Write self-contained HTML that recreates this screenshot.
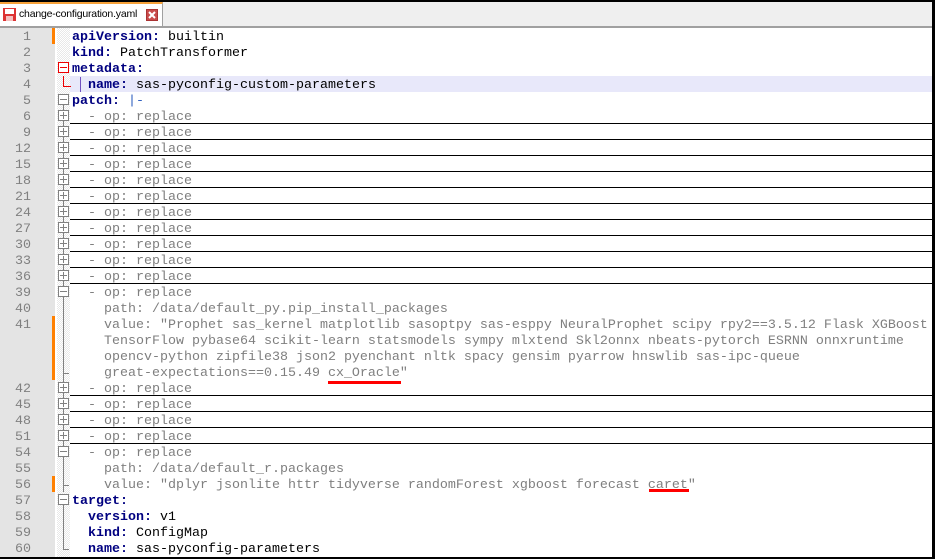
<!DOCTYPE html><html><head><style>
body{margin:0;width:935px;height:559px;overflow:hidden;background:#fff;position:relative;font-family:"Liberation Mono",monospace}
#frame{position:absolute;left:0;top:0;border-top:2px solid #000;border-right:3px solid #000;border-bottom:2px solid #000;box-sizing:border-box;width:935px;height:559px}
#tabbar{position:absolute;left:0;top:2px;width:932px;height:24px;background:#efefef;border-bottom:2px solid #a0a0a0}
#tab{position:absolute;left:0;top:2px;width:163px;height:24px;background:#fff;border-top:2px solid #f7a23a;border-right:1px solid #a0a0a0;box-sizing:border-box;font:10.5px "Liberation Sans",sans-serif;letter-spacing:-0.2px;color:#000}
#gut{position:absolute;left:0;top:28px;width:55px;height:529px;background:#e4e4e4}
#fold{position:absolute;left:57px;top:28px;width:13px;height:529px;background-image:repeating-conic-gradient(#fff 0 25%,#e8e8e8 0 50%);background-size:2px 2px}
.r{position:absolute;left:0;height:16px;width:932px;line-height:16px;font-size:13.33px;white-space:pre}
.n{position:absolute;left:0;width:31px;top:2px;text-align:right;color:#808080}
.t{position:absolute;left:72px;top:2px}
.k{color:#000080;font-weight:bold}
.g{color:#7f7f7f}
.sep{position:absolute;left:70px;right:0;bottom:0;height:1px;background:#000}
.box{position:absolute;left:58px;top:2px;width:11px;height:11px;border:1px solid #808080;box-sizing:border-box;background:#fff}
.box::before{content:"";position:absolute;left:1px;right:1px;top:4px;height:1px;background:#808080}
.plus::after{content:"";position:absolute;top:1px;bottom:1px;left:4px;width:1px;background:#808080}
.red{border-color:#e00}.red::before{background:#e00}
.vl{position:absolute;left:63px;width:1px;background:#808080}
.om{position:absolute;left:52px;width:3px;background:#ff8000}
</style></head><body>
<div id="tabbar"></div>
<div id="tab"><svg style="position:absolute;left:3px;top:4px" width="13" height="13"><rect x="0" y="0" width="13" height="13" fill="#d33"/><rect x="2" y="1" width="9" height="5" fill="#fff"/><rect x="3" y="8" width="7" height="5" fill="#f4c0c0"/></svg><span style="position:absolute;left:19px;top:4px">change-configuration.yaml</span><svg style="position:absolute;left:146px;top:5px" width="12" height="12"><rect x="0.5" y="0.5" width="11" height="11" fill="#c84a4a" stroke="#a33"/><path d="M3 3L9 9M9 3L3 9" stroke="#fff" stroke-width="2"/></svg></div>
<div id="gut"></div><div id="fold"></div>
<div id="code"></div>
<script>
var rows=[
["1",'<span class="k">apiVersion:</span> builtin',null],
["2",'<span class="k">kind:</span> PatchTransformer',null],
["3",'<span class="k">metadata:</span>','mr'],
["4",'  <span class="k">name:</span> sas-pyconfig-custom-parameters','hl'],
["5",'<span class="k">patch:</span> <span style="color:#3060c0">|-</span>','m']];
["6","9","12","15","18","21","24","27","30","33","36"].forEach(function(n){rows.push([n,'<span class="g">  - op: replace</span>','p'])});
rows.push(["39",'<span class="g">  - op: replace</span>','m']);
rows.push(["40",'<span class="g">    path: /data/default_py.pip_install_packages</span>',null]);
rows.push(["41",'<span class="g">    value: "Prophet sas_kernel matplotlib sasoptpy sas-esppy NeuralProphet scipy rpy2==3.5.12 Flask XGBoost</span>',null]);
rows.push(["",'<span class="g">    TensorFlow pybase64 scikit-learn statsmodels sympy mlxtend Skl2onnx nbeats-pytorch ESRNN onnxruntime</span>',null]);
rows.push(["",'<span class="g">    opencv-python zipfile38 json2 pyenchant nltk spacy gensim pyarrow hnswlib sas-ipc-queue</span>',null]);
rows.push(["",'<span class="g">    great-expectations==0.15.49 cx_Oracle"</span>','end']);
["42","45","48","51"].forEach(function(n){rows.push([n,'<span class="g">  - op: replace</span>','p'])});
rows.push(["54",'<span class="g">  - op: replace</span>','m']);
rows.push(["55",'<span class="g">    path: /data/default_r.packages</span>',null]);
rows.push(["56",'<span class="g">    value: "dplyr jsonlite httr tidyverse randomForest xgboost forecast caret"</span>','end']);
rows.push(["57",'<span class="k">target:</span>','m']);
rows.push(["58",'  <span class="k">version:</span> v1',null]);
rows.push(["59",'  <span class="k">kind:</span> ConfigMap',null]);
rows.push(["60",'  <span class="k">name:</span> sas-pyconfig-parameters','end']);
var h='';
h+='<div class="vl" style="top:'+(28+16*4+13)+'px;height:'+(16*25-13)+'px"></div>';
h+='<div class="vl" style="top:'+(28+16*29+13)+'px;height:'+(16*3-4)+'px"></div>';
rows.forEach(function(r,i){
 var top=28+16*i, s=r[2], extra='', bg='';
 if(s=='hl'){bg='background:linear-gradient(to right,transparent 70px,#e8e8fa 70px);';extra+='<div style="position:absolute;left:80px;top:1px;width:1px;height:15px;background:#7050c0"></div><div style="position:absolute;left:63px;top:0;width:1px;height:10px;background:#e00"></div><div style="position:absolute;left:63px;top:10px;width:8px;height:1px;background:#e00"></div>';}
 if(s=='m'||s=='mr'){extra+='<div class="box'+(s=='mr'?' red':'')+'"></div>';}
 if(s=='p'){extra+='<div class="box plus"></div><div class="sep"></div>';}
 if(s=='end'){extra+='<div style="position:absolute;left:63px;top:9px;width:6px;height:1px;background:#808080"></div>';}
 h+='<div class="r" style="top:'+top+'px;'+bg+'"><span class="n">'+r[0]+'</span>'+extra+'<span class="t">'+r[1]+'</span></div>';
});
h+='<div class="om" style="top:28px;height:16px"></div>';
h+='<div class="om" style="top:'+(28+16*18)+'px;height:64px"></div>';
h+='<div class="om" style="top:'+(28+16*28)+'px;height:16px"></div>';
h+='<div style="position:absolute;left:328px;top:381px;width:73px;height:3px;background:#f00"></div>';
h+='<div style="position:absolute;left:649px;top:489px;width:40px;height:3px;background:#f00"></div>';
document.getElementById('code').innerHTML=h;
</script>
<div id="frame" style="pointer-events:none"></div>
</body></html>
